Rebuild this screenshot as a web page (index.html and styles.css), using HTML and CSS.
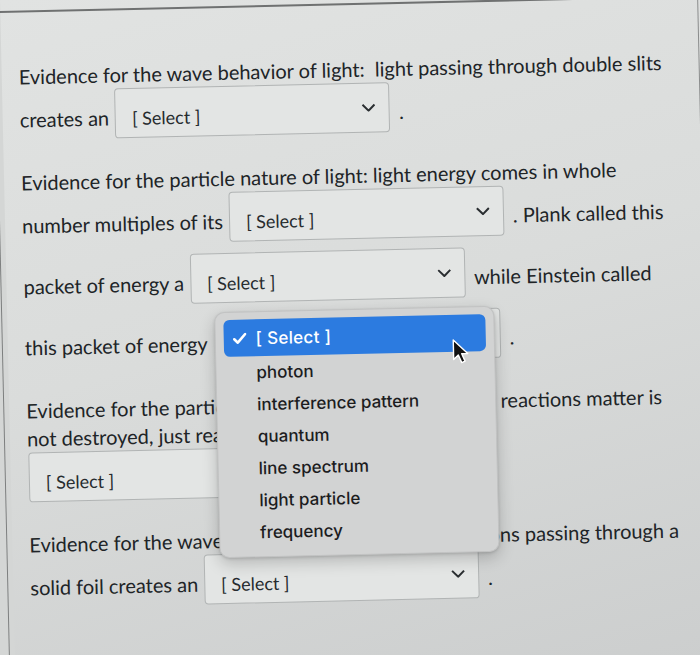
FILE: index.html
```html
<!DOCTYPE html>
<html lang="en">
<head>
<meta charset="utf-8">
<title>Quiz question</title>
<link rel="stylesheet" href="styles.css">
</head>
<body>
<div class="viewport">
<div class="screen">
  <div class="panel">
    <div class="para">
      <div class="row"><span class="txt">Evidence for the wave behavior of light:&nbsp; light passing through double slits</span></div>
      <div class="row sel-row"><span class="txt">creates an</span><span class="select"><span class="value">[ Select ]</span><svg class="chev" viewBox="0 0 14 8" width="14" height="8"><polyline points="1,1 7,7 13,1"/></svg></span><span class="txt">.</span></div>
    </div>

    <div class="para">
      <div class="row"><span class="txt">Evidence for the particle nature of light: light energy comes in whole</span></div>
      <div class="row sel-row"><span class="txt">number multiples of its</span><span class="select"><span class="value">[ Select ]</span><svg class="chev" viewBox="0 0 14 8" width="14" height="8"><polyline points="1,1 7,7 13,1"/></svg></span><span class="txt">. Plank called this</span></div>
      <div class="row sel-row"><span class="txt">packet of energy a</span><span class="select"><span class="value">[ Select ]</span><svg class="chev" viewBox="0 0 14 8" width="14" height="8"><polyline points="1,1 7,7 13,1"/></svg></span><span class="txt">while Einstein called</span></div>
      <div class="row sel-row"><span class="txt">this packet of energy</span><span class="select open"><span class="value">[ Select ]</span><svg class="chev" viewBox="0 0 14 8" width="14" height="8"><polyline points="1,1 7,7 13,1"/></svg>
          <span class="menu">
            <span class="opt active"><svg class="check" viewBox="0 0 14 12" width="14" height="12"><polyline points="1.5,6.5 5,10 12.5,1.5"/></svg>[ Select ]</span>
            <span class="opt">photon</span>
            <span class="opt">interference pattern</span>
            <span class="opt">quantum</span>
            <span class="opt">line spectrum</span>
            <span class="opt">light particle</span>
            <span class="opt">frequency</span>
            <svg class="cursor" viewBox="0 0 14 22" width="17" height="26"><path d="M1 1 L1 17.5 L5 13.8 L7.8 20.3 L10.6 19.1 L7.9 12.8 L13 12.8 Z"/></svg>
          </span>
        </span><span class="txt">.</span></div>
    </div>

    <div class="para">
      <div class="row"><span class="txt">Evidence for the particle nature of matter: in chemical reactions matter is</span></div>
      <div class="row"><span class="txt">not destroyed, just rearranged. This is evidence of</span></div>
      <div class="row sel-row"><span class="select first"><span class="value">[ Select ]</span><svg class="chev" viewBox="0 0 14 8" width="14" height="8"><polyline points="1,1 7,7 13,1"/></svg></span><span class="txt">.</span></div>
    </div>

    <div class="para">
      <div class="row"><span class="txt">Evidence for the wave nature of matter: all the electrons passing through a</span></div>
      <div class="row sel-row"><span class="txt">solid foil creates an</span><span class="select"><span class="value">[ Select ]</span><svg class="chev" viewBox="0 0 14 8" width="14" height="8"><polyline points="1,1 7,7 13,1"/></svg></span><span class="txt">.</span></div>
    </div>
  </div>
</div>
</div>
</body>
</html>
```

FILE: styles.css
```css
html, body {
  margin: 0;
  padding: 0;
}

body {
  background: #d4d6d5;
}

.viewport {
  width: 700px;
  height: 655px;
  overflow: hidden;
  background: #d4d6d5;
}

.screen {
  width: 740px;
  height: 700px;
  transform: rotate(-1.3deg);
  transform-origin: 0 0;
  background: linear-gradient(165deg, #e1e3e2 0%, #dadcdb 45%, #cbcdcd 100%);
}

.panel {
  position: relative;
  box-sizing: border-box;
  width: 704px;
  height: 690px;
  margin-left: -6px;
  padding-top: 11px;
  padding-left: 23px;
  background:
    linear-gradient(#6f7171, #6f7171) 0 11px / 100% 2px no-repeat,
    linear-gradient(#7d7f7f, #7d7f7f) 0 11px / 1px 100% no-repeat,
    linear-gradient(#8a8c8c, #8a8c8c) 703px 11px / 1px 100% no-repeat;
}

.panel > .para:first-child {
  margin-top: 52px;
}

.para {
  display: flex;
  flex-direction: column;
  margin-bottom: 28px;
  font-family: "Lato", "Liberation Sans", sans-serif;
  font-size: 20px;
  line-height: 28px;
  color: #202427;
}

.row {
  display: flex;
  align-items: baseline;
  white-space: pre;
}

.sel-row + .sel-row {
  margin-top: 11px;
}

.select {
  display: inline-flex;
  align-items: center;
  justify-content: space-between;
  box-sizing: border-box;
  width: 275px;
  height: 50px;
  margin: 0 9px 0 6px;
  padding: 10px 13px 0 16px;
  border: 1px solid #b1b4b4;
  border-radius: 4px;
  background: #e3e5e4;
  font-size: 18px;
  color: #262b2e;
}

.select.first {
  margin-left: 1px;
}

.select.open {
  position: relative;
  margin-left: 18px;
}

.chev {
  margin-top: -10px;
  fill: none;
  stroke: #2a2e31;
  stroke-width: 2;
}

.menu {
  position: absolute;
  left: -12px;
  top: -3px;
  z-index: 5;
  width: 280px;
  box-sizing: border-box;
  padding: 7px 8px 8px;
  display: flex;
  flex-direction: column;
  background: #d2d3d3;
  border: 1px solid #c2c3c3;
  border-radius: 10px;
  box-shadow: 0 6px 16px rgba(0, 0, 0, 0.2), 0 1px 3px rgba(0, 0, 0, 0.15);
  font-family: "Inter", "Open Sans", sans-serif;
  font-size: 17px;
  font-weight: 500;
  line-height: 22px;
  color: #1c1c1e;
}

.opt {
  display: flex;
  align-items: center;
  height: 32px;
  padding-left: 32px;
}

.opt.active {
  height: 37px;
  padding-left: 9px;
  border-radius: 6px;
  background: #2c7be0;
  color: #ffffff;
  letter-spacing: 0.3px;
}

.check {
  margin-right: 9px;
  fill: none;
  stroke: #ffffff;
  stroke-width: 2.6;
  stroke-linecap: round;
  stroke-linejoin: round;
}

.cursor {
  position: absolute;
  left: 236px;
  top: 31px;
  fill: #111111;
  stroke: #ffffff;
  stroke-width: 1.2;
  stroke-linejoin: round;
}
```
